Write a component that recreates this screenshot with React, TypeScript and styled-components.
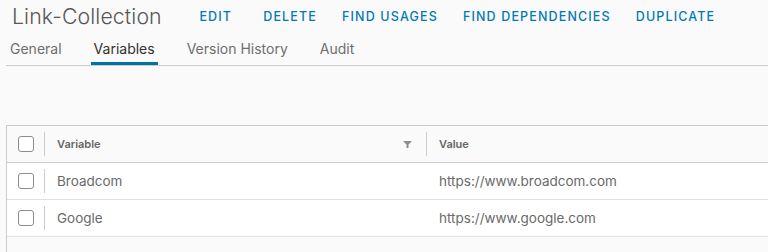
import React from 'react'
import styled, { createGlobalStyle } from 'styled-components'

const GlobalStyle = createGlobalStyle`
  html, body {
    margin: 0;
    padding: 0;
    background: #fafafa;
    overflow: hidden;
  }

  body {
    font-family: Inter, 'Noto Sans', sans-serif;
    color: #565656;
  }
`

const Page = styled.div`
  padding: 0 0 0 6px;
`

const Header = styled.div`
  display: flex;
  align-items: center;
  height: 32px;
  padding-left: 6px;
`

const Title = styled.h1`
  margin: 0 19px 0 0;
  font-size: 21.3px;
  font-weight: 300;
  color: #575757;
  letter-spacing: 0.1px;
`

const ActionButton = styled.button`
  min-width: 70px;
  border: 0;
  background: none;
  padding: 0 12.5px;
  font-family: inherit;
  font-size: 12.5px;
  font-weight: 500;
  letter-spacing: 1.15px;
  text-align: center;
  text-transform: uppercase;
  color: #0079b8;
  cursor: pointer;
`

const Tabs = styled.ul`
  display: flex;
  list-style: none;
  margin: 0 0 59px;
  padding: 0 0 0 1px;
  height: 33px;
  border-bottom: 1px solid #ccc;
`

const Tab = styled.li<{ $active?: boolean }>`
  display: flex;
  align-items: center;
  margin-right: 26px;
  padding: 0 3px;
  font-size: 14px;
  color: ${p => (p.$active ? '#313131' : '#6e6e6e')};
  box-shadow: ${p => (p.$active ? 'inset 0 -3px 0 #0072a3' : 'none')};
`

const Grid = styled.div`
  width: 800px;
  border: 1px solid #ccc;
  border-right: 0;
  background: #fafafa;
`

const Row = styled.div<{ $head?: boolean }>`
  display: grid;
  grid-template-columns: 38px 382px 1fr;
  height: 36px;
  border-bottom: 1px solid ${p => (p.$head ? '#ccc' : '#e0e0e0')};
  background: ${p => (p.$head ? '#fafafa' : '#fff')};

  &:last-of-type {
    border-bottom-color: #ccc;
  }
`

const Cell = styled.div<{ $head?: boolean; $divider?: boolean }>`
  position: relative;
  display: flex;
  align-items: center;
  justify-content: space-between;
  padding: 0 12px;
  font-size: ${p => (p.$head ? '11px' : '13.5px')};
  font-weight: ${p => (p.$head ? 600 : 400)};
  color: ${p => (p.$head ? '#666' : '#6a6a6a')};

  ${p =>
    p.$divider &&
    `
    &::after {
      content: '';
      position: absolute;
      right: 0;
      top: 6px;
      bottom: 6px;
      width: 1px;
      background: #ccc;
    }
  `}
`

const CheckCell = styled(Cell)`
  padding: 0 0 0 11px;
`

const Checkbox = styled.span`
  display: block;
  width: 14px;
  height: 14px;
  border: 1px solid #8c8c8c;
  border-radius: 3px;
  background: #fff;
`

const Footer = styled.div`
  height: 24px;
`

const FilterIcon = () => (
  <svg width="9" height="9" viewBox="0 0 9 9" style={{ marginRight: 3 }}>
    <path d="M0 1h9L5.5 4.5V8h-2V4.5z" fill="#8c8c8c" />
  </svg>
)

const variables = [
  { name: 'Broadcom', value: 'https://www.broadcom.com' },
  { name: 'Google', value: 'https://www.google.com' },
]

const actions = ['Edit', 'Delete', 'Find Usages', 'Find Dependencies', 'Duplicate']
const tabs = ['General', 'Variables', 'Version History', 'Audit']

export default function App() {
  return (
    <Page>
      <GlobalStyle />
      <Header>
        <Title>Link-Collection</Title>
        {actions.map(a => (
          <ActionButton key={a}>{a}</ActionButton>
        ))}
      </Header>
      <Tabs>
        {tabs.map(t => (
          <Tab key={t} $active={t === 'Variables'}>
            {t}
          </Tab>
        ))}
      </Tabs>
      <Grid>
        <Row $head>
          <CheckCell $divider>
            <Checkbox />
          </CheckCell>
          <Cell $head $divider>
            Variable
            <FilterIcon />
          </Cell>
          <Cell $head>Value</Cell>
        </Row>
        {variables.map(v => (
          <Row key={v.name}>
            <CheckCell $divider>
              <Checkbox />
            </CheckCell>
            <Cell>{v.name}</Cell>
            <Cell>{v.value}</Cell>
          </Row>
        ))}
        <Footer />
      </Grid>
    </Page>
  )
}
